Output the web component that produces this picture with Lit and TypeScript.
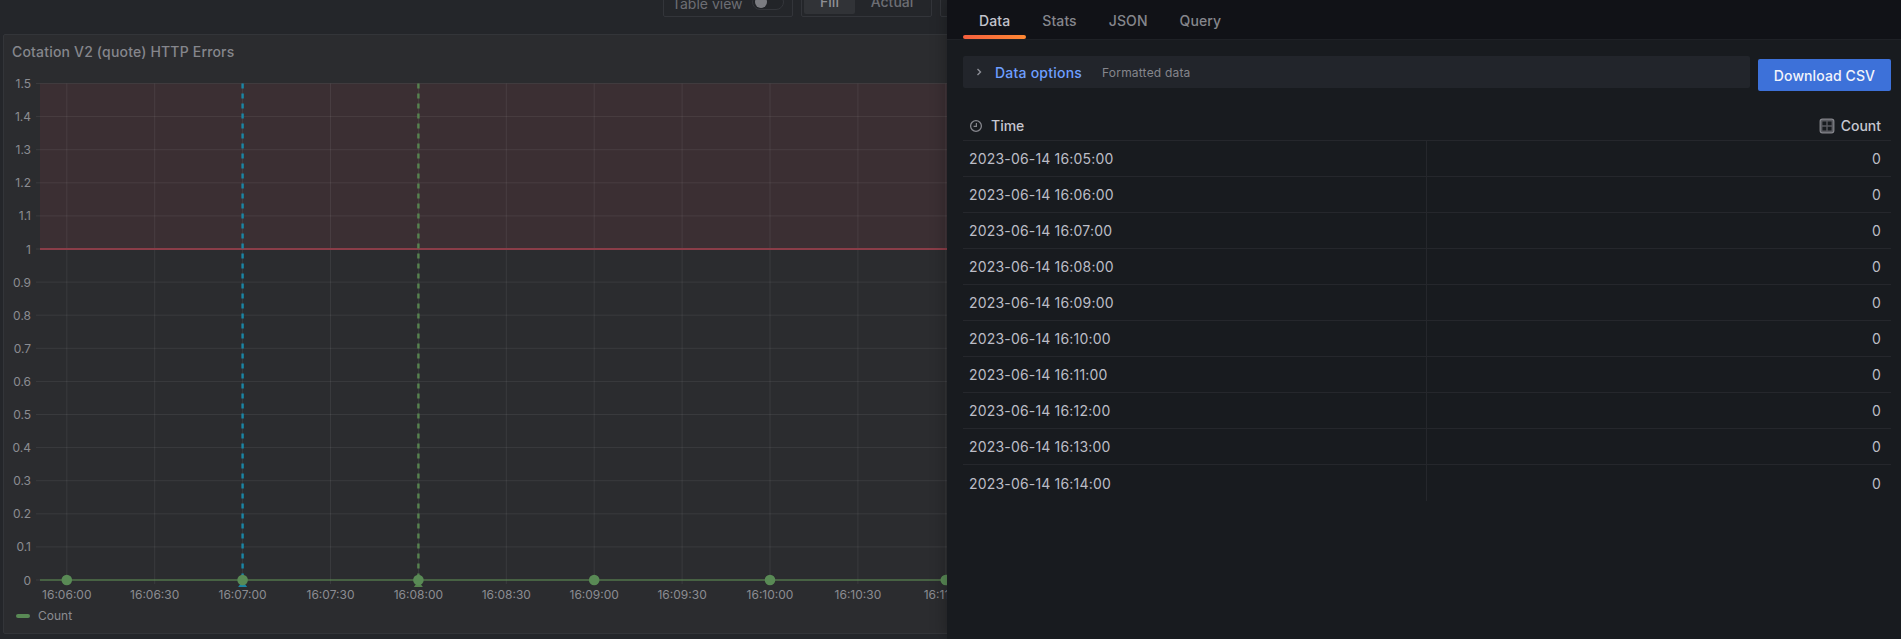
import { LitElement, html, css, svg } from "lit";
import { customElement } from "lit/decorators.js";

const PW = 907;
const X0 = 40;
const xAt = (i: number) => 66.8 + i * 87.9;
const yAt = (v: number) => 580 - v * 331;

const rows = ["05", "06", "07", "08", "09", "10", "11", "12", "13", "14"];
const xLabels = ["16:06:00","16:06:30","16:07:00","16:07:30","16:08:00","16:08:30","16:09:00","16:09:30","16:10:00","16:10:30","16:11:00"];
const yLabels = ["0","0.1","0.2","0.3","0.4","0.5","0.6","0.7","0.8","0.9","1","1.1","1.2","1.3","1.4","1.5"];

@customElement("chart-plot")
class ChartPlot extends LitElement {
  static styles = css`
    :host { display: block; }
    svg { display: block; }
    text { font-family: Inter, "Liberation Sans", sans-serif; font-size: 12px; fill: #8b8c92; }
  `;
  render() {
    const top = yAt(1.5), one = yAt(1), zero = yAt(0);
    return html`<svg width="947" height="639" viewBox="0 0 947 639">
      ${svg`<rect x="${X0}" y="${top}" width="${PW}" height="${one - top}" fill="#3b2f33"></rect>`}
      ${yLabels.map((l, i) => {
        const y = yAt(i / 10);
        return svg`
          <line x1="${X0 - 4}" x2="947" y1="${y}" y2="${y}" stroke="#ffffff" stroke-opacity="0.07"></line>
          <text x="31" y="${y + 4.5}" text-anchor="end">${l}</text>`;
      })}
      ${xLabels.map((l, i) => {
        const x = xAt(i);
        return svg`
          <line x1="${x}" x2="${x}" y1="${top}" y2="${zero + 4}" stroke="#ffffff" stroke-opacity="0.07"></line>
          <text x="${x}" y="${zero + 19}" text-anchor="middle">${l}</text>`;
      })}
      <line x1="${X0}" x2="947" y1="${one}" y2="${one}" stroke="#8a3d48" stroke-width="2"></line>
      <line x1="${xAt(2)}" x2="${xAt(2)}" y1="${top}" y2="${zero}" stroke="#1a86a5" stroke-width="2.4" stroke-dasharray="5 5"></line>
      <line x1="${xAt(4)}" x2="${xAt(4)}" y1="${top}" y2="${zero}" stroke="#56834f" stroke-width="2.4" stroke-dasharray="5 5"></line>
      <line x1="${X0}" x2="947" y1="${zero}" y2="${zero}" stroke="#5d9150" stroke-width="1"></line>
      <path d="M${xAt(2) - 4.5} 587 L${xAt(2)} 581 L${xAt(2) + 4.5} 587 Z" fill="#1a86a5"></path>
      <path d="M${xAt(4) - 4.5} 587 L${xAt(4)} 581 L${xAt(4) + 4.5} 587 Z" fill="#56834f"></path>
      ${[0, 2, 4, 6, 8, 10].map((i) => svg`<circle cx="${xAt(i)}" cy="${zero}" r="5.3" fill="#598a55"></circle>`)}
    </svg>`;
  }
}

@customElement("app-root")
export class AppRoot extends LitElement {
  static styles = css`
    :host {
      display: block;
      width: 1901px;
      height: 639px;
      position: relative;
      overflow: hidden;
      background: #24262a;
      font-family: Inter, "Liberation Sans", sans-serif;
    }
    .page { display: flex; flex-direction: column; height: 100%; padding: 0 3px; box-sizing: border-box; }
    .toolbar { display: flex; justify-content: flex-end; gap: 8px; height: 34px; flex: none; width: 958px; }
    .box {
      height: 32px; margin-top: -15px; box-sizing: border-box; flex: none;
      border: 1px solid #33353a; border-radius: 2px; display: flex; align-items: center; color: #6d6e74; font-size: 14px;
    }
    .tv { width: 130px; padding: 4px 0 0 8px; gap: 9px; }
    .toggle { width: 32px; height: 16px; margin-top: -2px; border: 1px solid #34363b; border-radius: 8px; box-sizing: border-box; display: flex; align-items: center; padding-left: 2px; background: #222428; }
    .knob { width: 12px; height: 12px; border-radius: 50%; background: #7b7c81; }
    .fa { width: 131px; padding: 2px; font-weight: 500; align-items: stretch; }
    .fa span { display: flex; align-items: flex-end; justify-content: center; line-height: 16px; padding-bottom: 4px; box-sizing: border-box; }
    .fill { width: 51px; background: #313337; color: #8e8f94; border-radius: 2px; }
    .actual { flex: 1; }
    .last { width: 21px; }
    .panel { flex: none; height: 600px; box-sizing: border-box; background: #2b2c2f; border: 1px solid #333539; border-radius: 2px; position: relative; }
    .title { font-size: 14px; font-weight: 500; letter-spacing: 0.18px; color: #85868c; padding: 9px 8px 0; line-height: 16px; height: 48px; box-sizing: border-box; }
    .plot { position: absolute; left: -4px; top: -35px; }
    .legend { position: absolute; left: 12px; bottom: 10px; display: flex; align-items: center; gap: 8px; font-size: 12px; color: #8b8c92; }
    .swatch { width: 14px; height: 4px; border-radius: 2px; background: #598a55; }

    .drawer {
      position: absolute; left: 947px; top: 0; width: 954px; height: 639px;
      background: #181b1f; box-shadow: 0 0 16px rgba(0, 0, 0, 0.3); color: #ccccdc;
    }
    .tabs { height: 40px; background: #111217; display: flex; padding-left: 16px; box-sizing: border-box; border-bottom: 1px solid #1f2126; }
    .tab { position: relative; padding: 0 16px; font-size: 14px; font-weight: 500; line-height: 41px; color: #85868c; height: 39px; letter-spacing: 0.1px; }
    .tab.on { color: #c2c3cc; }
    .tab.on::after { content: ""; position: absolute; left: 0; right: 0; bottom: 0; height: 4px; border-radius: 2px; background: linear-gradient(90deg, #f55f3e, #ff8833); }
    .opts { display: flex; gap: 8px; padding: 16px 10px 0 16px; }
    .bar { flex: 1; height: 32px; background: #22252b; border-radius: 2px; display: flex; align-items: center; }
    .chev { margin-left: 11px; width: 10px; height: 10px; color: #8c8e96; flex: none; }
    .bar b { margin-left: 11px; font-size: 14px; font-weight: 500; letter-spacing: 0.22px; color: #6e9fff; }
    .bar em { margin-left: 20px; font-size: 12px; font-style: normal; color: #85868c; letter-spacing: 0.2px; }
    .dl { width: 133px; height: 32px; margin-top: 3px; border: 0; border-radius: 2px; background: #3d71d9; color: #f2f4fb; font: 500 14px Inter, "Liberation Sans", sans-serif; letter-spacing: 0.1px; padding: 0; }
    .table { margin: 20px 10px 0 16px; }
    .head, .row { display: grid; grid-template-columns: 463px 1fr; box-sizing: border-box; }
    .head { height: 30px; border-bottom: 1px solid #25272c; align-items: center; font-size: 14px; font-weight: 500; color: #c6c7d0; }
    .row { height: 36px; border-bottom: 1px solid #25272c; font-size: 14px; letter-spacing: 0.18px; color: #bcbdc6; align-items: stretch; }
    .row:last-child { border-bottom: 0; }
    .row > div { display: flex; align-items: center; padding: 0 6px; }
    .row > div:last-child { border-left: 1px solid #25272c; justify-content: flex-end; padding-right: 10px; }
    .hc { display: flex; align-items: center; gap: 7px; }
    .hc.t { padding-left: 7px; }
    .hc.c { justify-content: flex-end; padding-right: 10px; gap: 6px; }
    .hc svg { width: 14px; height: 14px; color: #85868c; flex: none; }
    .hc.c svg { width: 16px; height: 16px; }
  `;
  render() {
    return html`
      <div class="page">
        <div class="toolbar">
          <div class="box tv"><span>Table view</span><span class="toggle"><span class="knob"></span></span></div>
          <div class="box fa"><span class="fill">Fill</span><span class="actual">Actual</span></div>
          <div class="box last"></div>
        </div>
        <div class="panel">
          <div class="title">Cotation V2 (quote) HTTP Errors</div>
          <chart-plot class="plot"></chart-plot>
          <div class="legend"><span class="swatch"></span><span>Count</span></div>
        </div>
      </div>
      <aside class="drawer">
        <div class="tabs">
          <div class="tab on">Data</div><div class="tab">Stats</div><div class="tab">JSON</div><div class="tab">Query</div>
        </div>
        <div class="opts">
          <div class="bar">
            <svg class="chev" viewBox="0 0 10 10"><path d="M3.5 2 L6.5 5 L3.5 8" fill="none" stroke="currentColor" stroke-width="1.4"></path></svg>
            <b>Data options</b><em>Formatted data</em>
          </div>
          <button class="dl">Download CSV</button>
        </div>
        <div class="table">
          <div class="head">
            <div class="hc t"><svg viewBox="0 0 14 14"><circle cx="6" cy="7" r="5.4" fill="none" stroke="currentColor" stroke-width="1.3"></circle><path d="M6.4 4 V7.4 H3.6" fill="none" stroke="currentColor" stroke-width="1.2"></path></svg><span>Time</span></div>
            <div class="hc c"><svg viewBox="0 0 14 14"><rect x="1" y="1" width="12" height="12" rx="2" fill="currentColor" fill-opacity="0.6" stroke="currentColor"></rect><path d="M3 3h3.4v3.4h-3.4zM7.6 3h3.4v3.4h-3.4zM3 7.6h3.4v3.4h-3.4zM7.6 7.6h3.4v3.4h-3.4z" fill="#181b1f"></path></svg><span>Count</span></div>
          </div>
          ${rows.map((m) => html`<div class="row"><div>2023-06-14 16:${m}:00</div><div>0</div></div>`)}
        </div>
      </aside>
    `;
  }
}
void ChartPlot;
